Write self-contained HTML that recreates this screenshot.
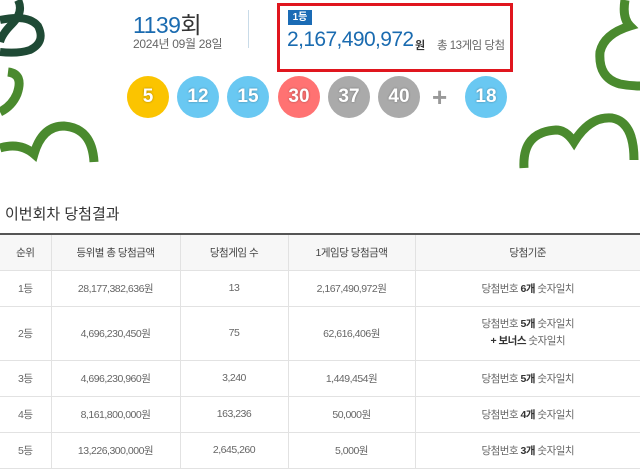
<!DOCTYPE html>
<html><head><meta charset="utf-8"><style>
*{margin:0;padding:0;box-sizing:border-box}
body{width:640px;height:469px;overflow:hidden;background:#fff;font-family:"Liberation Sans","Noto Sans CJK KR",sans-serif;position:relative}
.abs{position:absolute;white-space:nowrap}
.ball{position:absolute;top:76px;width:42px;height:42px;border-radius:50%;color:#fff;font-weight:bold;font-size:19px;line-height:42px;text-align:center;text-shadow:0 0 2px rgba(0,0,0,.35)}
.y{background:#fbc400}.b{background:#69c8f2}.r{background:#ff7272}.g{background:#aaa}
table{position:absolute;left:0;top:233px;width:640px;border-collapse:collapse;border-top:2px solid #555;font-size:10.5px;color:#666;letter-spacing:-0.5px}
td,th{border-bottom:1px solid #e2e2e2;border-left:1px solid #e2e2e2;text-align:center;font-weight:normal}
td:first-child,th:first-child{border-left:none}
th{background:#f7f7f7;height:36px;color:#444}
td{height:36px}
b{color:#333}
</style></head><body>
<svg class="abs" style="left:0;top:0" width="640" height="170">
<g fill="none" stroke-linecap="butt">
<path d="M18 0 Q24 12 12 24 Q2 34 0 42" stroke="#1f4a35" stroke-width="8"/>
<path d="M0 20 Q28 14 38 26 Q46 42 30 50 Q18 54 0 52" stroke="#1f4a35" stroke-width="8"/>
<path d="M8 72 Q24 74 17 94 Q12 106 0 112" stroke="#4a8a2e" stroke-width="9"/>
<path d="M0 148 Q20 142 34 154 Q42 126 64 126 Q92 128 94 162" stroke="#4a8a2e" stroke-width="9"/>
<path d="M625 0 Q622 18 630 26 Q604 34 600 52 Q598 78 620 84 Q630 86 640 86" stroke="#4a8a2e" stroke-width="9"/>
<path d="M524 168 Q522 132 556 130 Q566 130 574 142 Q590 116 612 118 Q634 122 634 160" stroke="#4a8a2e" stroke-width="9"/>
</g></svg>
<div class="abs" style="left:133px;top:6px;font-size:23px;color:#1a6bb0;letter-spacing:-0.5px">1139<span style="color:#333">회</span></div>
<div class="abs" style="left:133px;top:35px;font-size:12px;color:#666;letter-spacing:-0.3px">2024년 09월 28일</div>
<div class="abs" style="left:248px;top:10px;width:1px;height:38px;background:#c9dbe8"></div>
<div class="abs" style="left:277px;top:3px;width:236px;height:69px;border:3px solid #e0161e"></div>
<div class="abs" style="left:288px;top:10px;width:24px;height:15px;background:#1a6bb5;color:#fff;font-size:10px;line-height:15px;text-align:center;font-weight:bold">1등</div>
<div class="abs" style="left:287px;top:28px;font-size:21px;color:#1a6bb0;letter-spacing:-0.6px">2,167,490,972</div>
<div class="abs" style="left:415px;top:37px;font-size:11px;color:#333;font-weight:bold">원</div>
<div class="abs" style="left:437px;top:37px;font-size:11.5px;color:#666;letter-spacing:-0.5px">총 13게임 당첨</div>
<div class="ball y" style="left:127px">5</div>
<div class="ball b" style="left:177px">12</div>
<div class="ball b" style="left:227px">15</div>
<div class="ball r" style="left:278px">30</div>
<div class="ball g" style="left:328px">37</div>
<div class="ball g" style="left:378px">40</div>
<div class="abs" style="left:432px;top:82px;font-size:26px;color:#999;font-weight:bold">+</div>
<div class="ball b" style="left:465px">18</div>
<div class="abs" style="left:5px;top:203px;font-size:15px;color:#333">이번회차 당첨결과</div>
<table>
<tr><th style="width:51px">순위</th><th style="width:129px">등위별 총 당첨금액</th><th style="width:108px">당첨게임 수</th><th style="width:127px">1게임당 당첨금액</th><th>당첨기준</th></tr>
<tr><td>1등</td><td>28,177,382,636원</td><td>13</td><td>2,167,490,972원</td><td>당첨번호 <b>6개</b> 숫자일치</td></tr>
<tr><td style="height:54px">2등</td><td>4,696,230,450원</td><td>75</td><td>62,616,406원</td><td style="line-height:17px">당첨번호 <b>5개</b> 숫자일치<br><b>+ 보너스</b> 숫자일치</td></tr>
<tr><td>3등</td><td>4,696,230,960원</td><td>3,240</td><td>1,449,454원</td><td>당첨번호 <b>5개</b> 숫자일치</td></tr>
<tr><td>4등</td><td>8,161,800,000원</td><td>163,236</td><td>50,000원</td><td>당첨번호 <b>4개</b> 숫자일치</td></tr>
<tr><td>5등</td><td>13,226,300,000원</td><td>2,645,260</td><td>5,000원</td><td>당첨번호 <b>3개</b> 숫자일치</td></tr>
</table>
</body></html>
